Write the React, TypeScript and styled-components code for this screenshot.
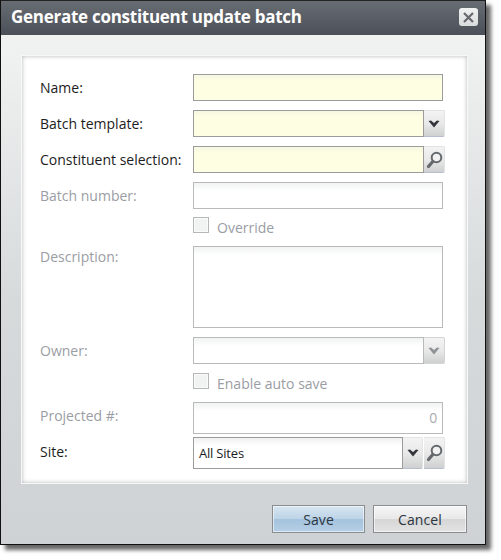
import React from "react";
import styled, { createGlobalStyle } from "styled-components";

const GlobalStyle = createGlobalStyle`
  html, body {
    margin: 0;
    padding: 0;
    background: #fff;
    font-family: "Open Sans", "Liberation Sans", sans-serif;
  }
`;

const Page = styled.div`
  width: 501px;
  height: 560px;
  overflow: hidden;
`;

const Dialog = styled.div`
  width: 486px;
  height: 545px;
  box-sizing: border-box;
  border: 1px solid #111;
  border-top-color: #222;
  box-shadow: 5px 5px 4px rgba(0, 0, 0, 0.6);
  display: flex;
  flex-direction: column;
  background: linear-gradient(#f2f2f2 0, #eff0f0 60px, #d6dadb 300px, #ced2d4 100%);
`;

const TitleBar = styled.div`
  height: 34px;
  flex: none;
  box-sizing: border-box;
  padding: 0 10px;
  display: flex;
  align-items: center;
  justify-content: space-between;
  background: linear-gradient(#686c73, #4b5058);
`;

const Title = styled.div`
  color: #fff;
  font-size: 17px;
  font-weight: 700;
  letter-spacing: -0.27px;
  margin-bottom: 3px;
`;

const CloseButton = styled.div`
  width: 19px;
  height: 18px;
  margin-right: -3px;
  margin-bottom: 2px;
  border-radius: 3px;
  background: linear-gradient(#f0f1f1, #d9dcdd);
  display: flex;
  align-items: center;
  justify-content: center;
`;

const Panel = styled.div`
  margin: 20px 17px 0 20px;
  height: 429px;
  box-sizing: border-box;
  background: #fff;
  border: 1px solid #f6f7f7;
  box-shadow: inset 0 0 4px rgba(0, 0, 0, 0.3);
  padding: 18px 22px 0 18px;
  display: flex;
  flex-direction: column;
`;

const Row = styled.div<{ $height?: number; $gap?: number }>`
  display: grid;
  grid-template-columns: 153px 1fr;
  height: ${(p) => p.$height ?? 27}px;
  margin-bottom: ${(p) => p.$gap ?? 9}px;
`;

const Label = styled.div<{ $disabled?: boolean; $line?: number }>`
  font-size: 14px;
  line-height: ${(p) => p.$line ?? 27}px;
  color: ${(p) => (p.$disabled ? "#9a9da3" : "#1c1c1c")};
`;

const Field = styled.div`
  display: flex;
  height: 100%;
  min-width: 0;
`;

const Input = styled.div<{ $required?: boolean; $disabled?: boolean; $width?: number }>`
  box-sizing: border-box;
  height: 100%;
  width: ${(p) => (p.$width ? `${p.$width}px` : "250px")};
  flex: none;
  border: 1px solid ${(p) => (p.$disabled ? "#b9bbbb" : "#9c9c9c")};
  background: ${(p) =>
    p.$required
      ? "linear-gradient(#f6f7e2, #fdfee2 6px)"
      : p.$disabled
      ? "linear-gradient(#f1f2f2, #fff 8px)"
      : "linear-gradient(#eff0f0, #fff 8px)"};
`;

const InputText = styled.div<{ $disabled?: boolean; $right?: boolean }>`
  font-size: ${(p) => (p.$right ? 14 : 13)}px;
  line-height: 30px;
  padding: 0 5px;
  letter-spacing: -0.2px;
  text-align: ${(p) => (p.$right ? "right" : "left")};
  color: ${(p) => (p.$disabled ? "#a8abb0" : "#1c1c1c")};
`;

const IconButton = styled.div<{ $disabled?: boolean; $narrow?: boolean }>`
  box-sizing: border-box;
  width: ${(p) => (p.$narrow ? 20 : 21)}px;
  margin-right: ${(p) => (p.$narrow ? 1 : 0)}px;
  height: 100%;
  flex: none;
  border: 1px solid ${(p) => (p.$disabled ? "#d2d4d5" : "#e2e3e4")};
  border-bottom-color: ${(p) => (p.$disabled ? "#d2d4d5" : "#b9bdd0")};
  border-left: none;
  border-radius: 0 2px 2px 0;
  background: linear-gradient(#f3f3f3, #e9e9e9 50%, #cfd0d0);
  display: flex;
  align-items: center;
  justify-content: center;
`;

const CheckRow = styled.div`
  display: flex;
  height: 16px;
  margin: 0 0 13px 153px;
`;

const CheckBox = styled.div`
  box-sizing: border-box;
  width: 16px;
  height: 16px;
  flex: none;
  border: 1px solid #b5b7b8;
  background: #f1f2f2;
  box-shadow: inset 0 0 0 1px #fafafa;
  margin-right: 8px;
`;

const CheckLabel = styled.span`
  font-size: 14px;
  line-height: 21px;
  color: #9a9da3;
`;

const Footer = styled.div`
  display: flex;
  justify-content: flex-end;
  gap: 8px;
  margin: 21px 18px 0 0;
`;

const Button = styled.div<{ $primary?: boolean }>`
  box-sizing: border-box;
  height: 28px;
  width: ${(p) => (p.$primary ? 93 : 94)}px;
  border: 1px solid #8b8e90;
  box-shadow: inset 0 0 0 1px rgba(255, 255, 255, 0.55);
  background: ${(p) =>
    p.$primary
      ? "linear-gradient(#d8e6f1, #bcd3e7 50%, #a5c3de 52%, #b5cfe5)"
      : "linear-gradient(#f6f6f6, #e8e8e8 50%, #d6d6d6 52%, #e3e3e3)"};
  color: #2b3640;
  font-size: 14px;
  letter-spacing: 0.1px;
  text-align: center;
  line-height: 27px;
`;

const Chevron = ({ color }: { color: string }) => (
  <svg width="12" height="8" viewBox="0 0 12 8">
    <path d="M0.5 1 L3 0.5 L6 3 L9 0.5 L11.5 1 L6 7.5 Z" fill={color} />
  </svg>
);

const Magnifier = () => (
  <svg width="17" height="18" viewBox="0 0 17 18">
    <circle cx="10.5" cy="6.5" r="4.8" fill="#f2f2f2" stroke="#66696c" strokeWidth="2" />
    <path d="M6.8 10.5 L2.5 15.5" stroke="#66696c" strokeWidth="3.2" strokeLinecap="round" />
  </svg>
);

export default function App() {
  return (
    <Page>
      <GlobalStyle />
      <Dialog>
        <TitleBar>
          <Title>Generate constituent update batch</Title>
          <CloseButton>
            <svg width="13" height="13" viewBox="0 0 13 13">
              <path d="M2 2 L11 11 M11 2 L2 11" stroke="#66696e" strokeWidth="2.2" />
            </svg>
          </CloseButton>
        </TitleBar>
        <Panel>
          <Row>
            <Label>Name:</Label>
            <Field>
              <Input $required />
            </Field>
          </Row>
          <Row>
            <Label>Batch template:</Label>
            <Field>
              <Input $required $width={231} />
              <IconButton>
                <Chevron color="#33373c" />
              </IconButton>
            </Field>
          </Row>
          <Row>
            <Label>Constituent selection:</Label>
            <Field>
              <Input $required $width={231} />
              <IconButton>
                <Magnifier />
              </IconButton>
            </Field>
          </Row>
          <Row $gap={8}>
            <Label $disabled>Batch number:</Label>
            <Field>
              <Input $disabled />
            </Field>
          </Row>
          <CheckRow>
            <CheckBox />
            <CheckLabel>Override</CheckLabel>
          </CheckRow>
          <Row $height={82}>
            <Label $disabled $line={22}>
              Description:
            </Label>
            <Field>
              <Input $disabled />
            </Field>
          </Row>
          <Row>
            <Label $disabled>Owner:</Label>
            <Field>
              <Input $disabled $width={231} />
              <IconButton $disabled>
                <Chevron color="#8f9296" />
              </IconButton>
            </Field>
          </Row>
          <CheckRow>
            <CheckBox />
            <CheckLabel>Enable auto save</CheckLabel>
          </CheckRow>
          <Row $gap={8}>
            <Label $disabled>Projected #:</Label>
            <Field>
              <Input $disabled>
                <InputText $disabled $right>
                  0
                </InputText>
              </Input>
            </Field>
          </Row>
          <Row>
            <Label $line={29}>Site:</Label>
            <Field>
              <Input $width={210}>
                <InputText>All Sites</InputText>
              </Input>
              <IconButton $narrow>
                <Chevron color="#33373c" />
              </IconButton>
              <IconButton>
                <Magnifier />
              </IconButton>
            </Field>
          </Row>
        </Panel>
        <Footer>
          <Button $primary>Save</Button>
          <Button>Cancel</Button>
        </Footer>
      </Dialog>
    </Page>
  );
}
